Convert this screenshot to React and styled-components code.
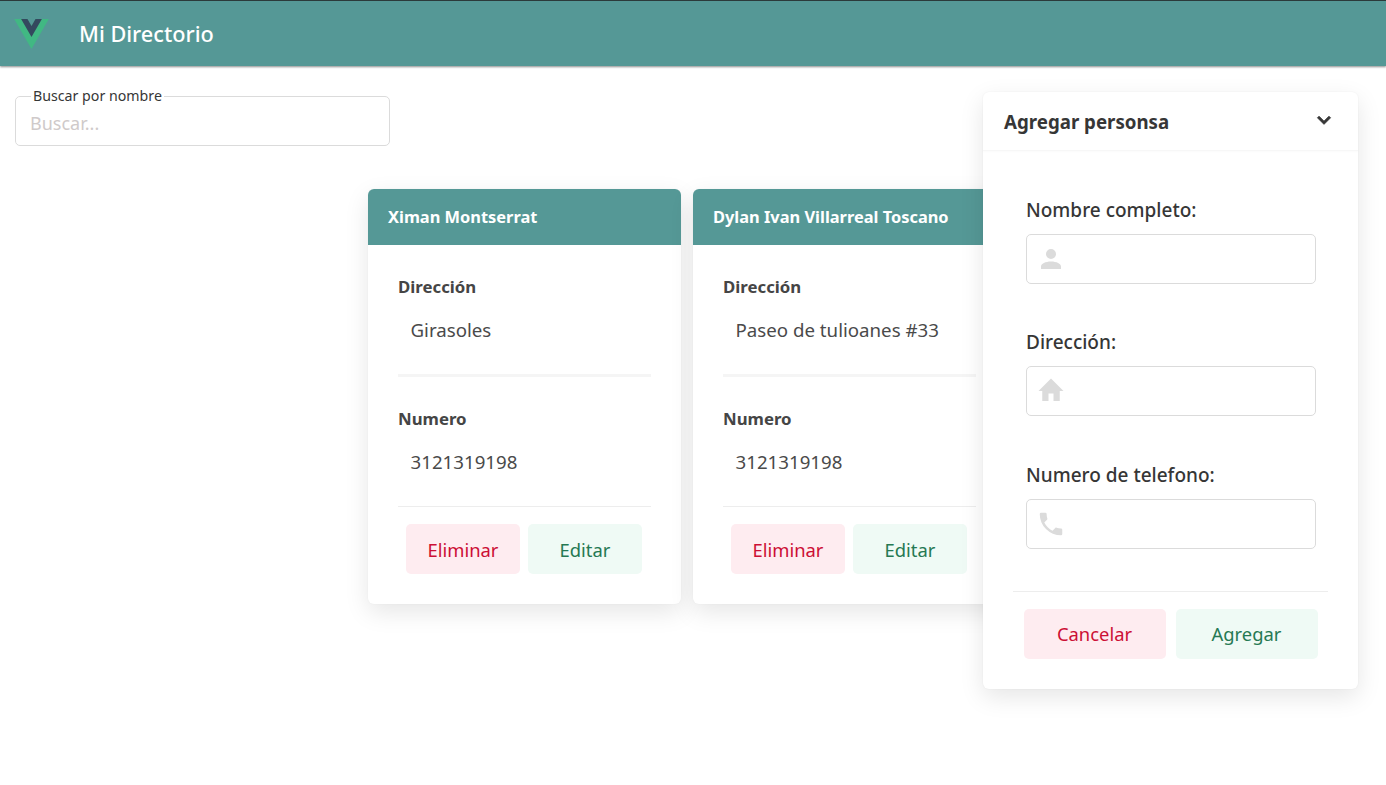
import styled, { createGlobalStyle } from "styled-components";

const GlobalStyle = createGlobalStyle`
  body {
    margin: 0;
    background: #fff;
    font-family: "Noto Sans", "Liberation Sans", sans-serif;
    color: #4a4a4a;
  }
`;

const Navbar = styled.header`
  display: flex;
  align-items: center;
  height: 65px;
  border-top: 1px solid #2b3a3a;
  background: #559896;
  box-shadow: 0 1px 2px rgba(0, 0, 0, 0.45);
  padding-left: 14px;
  gap: 30px;
`;

const Brand = styled.span`
  color: #fff;
  font-size: 21.7px;
  font-weight: 500;
`;

const Main = styled.main`
  position: relative;
  padding: 23px 15px 0;
  height: 719px;
  box-sizing: border-box;
`;

const SearchBox = styled.fieldset`
  width: 375px;
  height: 57px;
  box-sizing: border-box;
  margin: 0;
  padding: 0 14px;
  border: 1px solid #dbdbdb;
  border-radius: 5px;

  legend {
    font-size: 14.2px;
    line-height: 14px;
    padding: 0 2px;
    margin-left: 1px;
    color: #363636;
  }
`;

const SearchInput = styled.input`
  width: 100%;
  border: 0;
  outline: 0;
  padding: 0;
  height: 40px;
  font: inherit;
  font-size: 18px;
  background: transparent;

  &::placeholder {
    color: #cfcaca;
  }
`;

const CardRow = styled.section`
  display: flex;
  gap: 12px;
  margin-top: 43px;
  padding-left: 353px;
`;

const Card = styled.article`
  width: 313px;
  height: 415px;
  flex: none;
  background: #fff;
  border-radius: 6px;
  box-shadow: 0 8px 24px rgba(10, 10, 10, 0.1), 0 0 2px rgba(10, 10, 10, 0.04);
  overflow: hidden;
`;

const CardTitle = styled.h2`
  margin: 0;
  height: 56px;
  box-sizing: border-box;
  display: flex;
  align-items: center;
  padding: 0 0 2px 20px;
  background: #559896;
  color: #fff;
  font-size: 16.4px;
  font-weight: 700;
  white-space: nowrap;
`;

const CardBody = styled.div`
  padding: 31px 30px 0;
`;

const FieldName = styled.div`
  color: #454545;
  font-size: 16.8px;
  font-weight: 700;
  line-height: 22px;
`;

const FieldValue = styled.div`
  font-size: 18.7px;
  line-height: 24px;
  margin: 20px 0 0 12.5px;
  white-space: nowrap;
`;

const Rule = styled.hr`
  margin: ${(p) => p.$margin};
  border: 0;
  height: ${(p) => p.$thick}px;
  background: ${(p) => (p.$thick > 1 ? "#f5f5f5" : "#ededed")};
`;

const ButtonRow = styled.div`
  display: flex;
  justify-content: center;
  gap: ${(p) => p.$gap}px;
  padding-right: ${(p) => p.$nudge || 0}px;
`;

const Button = styled.button`
  width: ${(p) => p.$width}px;
  height: 50px;
  border: 0;
  border-radius: 5px;
  font: inherit;
  font-size: 18.4px;
  background: ${(p) => (p.$danger ? "#feecf0" : "#effaf5")};
  color: ${(p) => (p.$danger ? "#cc0f35" : "#257953")};
`;

const Panel = styled.aside`
  position: absolute;
  top: 26px;
  left: 983px;
  width: 375px;
  height: 597px;
  background: #fff;
  border-radius: 6px;
  box-shadow: 0 8px 24px rgba(10, 10, 10, 0.1), 0 0 2px rgba(10, 10, 10, 0.06);
`;

const PanelHeader = styled.div`
  display: flex;
  align-items: center;
  justify-content: space-between;
  height: 58px;
  padding: 0 21px;
  border-bottom: 1px solid #f7f7f7;
  box-shadow: 0 1px 2px rgba(10, 10, 10, 0.02);
  color: #363636;
  font-size: 18.7px;
  font-weight: 700;

  svg {
    margin-top: -2px;
  }
`;

const PanelForm = styled.form`
  display: flex;
  flex-direction: column;
  gap: 46.5px;
  padding: 46.75px 42px 0 43px;
`;

const FormField = styled.label`
  display: block;
  color: #363636;
  font-size: 19px;
  font-weight: 500;
  line-height: 24px;
`;

const InputShell = styled.span`
  display: flex;
  align-items: center;
  height: 50px;
  box-sizing: border-box;
  margin-top: 12px;
  padding-left: 9px;
  border: 1px solid #dbdbdb;
  border-radius: 5px;

  svg {
    flex: none;
    fill: #dbdbdb;
  }
`;

const BareInput = styled.input`
  flex: 1;
  min-width: 0;
  border: 0;
  outline: 0;
  font: inherit;
  background: transparent;
`;

const PanelFooter = styled.div`
  margin: 42px 30px 0;
`;

const Chevron = () => (
  <svg width="26" height="26" viewBox="0 0 24 24">
    <path
      fill="#363636"
      stroke="#363636"
      strokeWidth="0.9"
      d="M7.41,8.58L12,13.17L16.59,8.58L18,10L12,16L6,10L7.41,8.58Z"
    />
  </svg>
);

const ICONS = {
  account: "M12,4A4,4 0 0,1 16,8A4,4 0 0,1 12,12A4,4 0 0,1 8,8A4,4 0 0,1 12,4M12,14C16.42,14 20,15.79 20,18V20H4V18C4,15.79 7.58,14 12,14Z",
  home: "M10,20V14H14V20H19V12H22L12,2L2,12H5V20H10Z",
  phone: "M6.62,10.79C8.06,13.62 10.38,15.94 13.21,17.38L15.41,15.18C15.69,14.9 16.08,14.82 16.43,14.93C17.55,15.3 18.75,15.5 20,15.5A1,1 0 0,1 21,16.5V20A1,1 0 0,1 20,21A17,17 0 0,1 3,4A1,1 0 0,1 4,3H7.5A1,1 0 0,1 8.5,4C8.5,5.25 8.7,6.45 9.07,7.57C9.18,7.92 9.1,8.31 8.82,8.59L6.62,10.79Z",
};

const FieldIcon = ({ name }) => (
  <svg width="30" height="30" viewBox="0 0 24 24">
    <path d={ICONS[name]} />
  </svg>
);

const VueLogo = () => (
  <svg width="35" height="30" viewBox="0 0 261.76 226.69">
    <path fill="#41b883" d="M161.096.001l-30.225 52.351L100.647.001H-.005l130.877 226.688L261.749.001z" />
    <path fill="#34495e" d="M161.096.001l-30.225 52.351L100.647.001H52.346l78.526 136.01L209.398.001z" />
  </svg>
);

const people = [
  { name: "Ximan Montserrat", address: "Girasoles", phone: "3121319198" },
  { name: "Dylan Ivan Villarreal Toscano", address: "Paseo de tulioanes #33", phone: "3121319198" },
];

const fields = [
  { label: "Nombre completo:", icon: "account" },
  { label: "Dirección:", icon: "home" },
  { label: "Numero de telefono:", icon: "phone" },
];

export default function App() {
  return (
    <>
      <GlobalStyle />
      <Navbar>
        <VueLogo />
        <Brand>Mi Directorio</Brand>
      </Navbar>
      <Main>
        <SearchBox>
          <legend>Buscar por nombre</legend>
          <SearchInput placeholder="Buscar..." />
        </SearchBox>
        <CardRow>
          {people.map((person) => (
            <Card key={person.name}>
              <CardTitle>{person.name}</CardTitle>
              <CardBody>
                <FieldName>Dirección</FieldName>
                <FieldValue>{person.address}</FieldValue>
                <Rule $thick={3} $margin="32px 0 31px" />
                <FieldName>Numero</FieldName>
                <FieldValue>{person.phone}</FieldValue>
                <Rule $thick={1} $margin="32px 0 17px" />
                <ButtonRow $gap={8} $nudge={1}>
                  <Button $width={114} $danger>Eliminar</Button>
                  <Button $width={114}>Editar</Button>
                </ButtonRow>
              </CardBody>
            </Card>
          ))}
        </CardRow>
        <Panel>
          <PanelHeader>
            Agregar personsa
            <Chevron />
          </PanelHeader>
          <PanelForm>
            {fields.map((field) => (
              <FormField key={field.label}>
                {field.label}
                <InputShell>
                  <FieldIcon name={field.icon} />
                  <BareInput />
                </InputShell>
              </FormField>
            ))}
          </PanelForm>
          <PanelFooter>
            <Rule $thick={1} $margin="0 0 17px" />
            <ButtonRow $gap={10}>
              <Button $width={142} $danger>Cancelar</Button>
              <Button $width={142}>Agregar</Button>
            </ButtonRow>
          </PanelFooter>
        </Panel>
      </Main>
    </>
  );
}
